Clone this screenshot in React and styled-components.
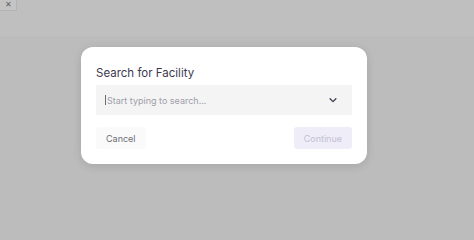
import React, { useState } from 'react'
import styled, { createGlobalStyle } from 'styled-components'

const GlobalStyle = createGlobalStyle`
  html, body {
    margin: 0;
    padding: 0;
    background: #bcbcbc;
    font-family: Inter, "Noto Sans", sans-serif;
    overflow: hidden;
  }
`

const Page = styled.div`
  position: relative;
  width: 100vw;
  height: 100vh;
  background: #bcbcbc;
  overflow: hidden;
`

const TopBar = styled.div`
  height: 37px;
  background: #bfbfbf;
  border-bottom: 1px solid #b9b9b9;
`

const CloseTab = styled.button`
  display: flex;
  align-items: center;
  justify-content: center;
  width: 17px;
  height: 11px;
  padding: 0;
  border: none;
  border-right: 1px solid #b4b4b4;
  border-bottom: 1px solid #b4b4b4;
  background: #c4c4c4;
  color: #5e5e5e;
  font-size: 8px;
  line-height: 1;
`

const Overlay = styled.div`
  position: absolute;
  inset: 0;
  display: flex;
  align-items: flex-start;
  padding: 47px 0 0 81px;
`

const Dialog = styled.div`
  width: 286px;
  box-sizing: border-box;
  padding: 18px 15px 15px;
  background: #ffffff;
  border-radius: 12px;
  box-shadow: 0 2px 10px rgba(0, 0, 0, 0.12);
`

const Title = styled.h2`
  margin: 0 0 4px;
  font-size: 11.5px;
  font-weight: 400;
  line-height: 16px;
  color: #3d3a4f;
`

const SelectBox = styled.div`
  display: flex;
  align-items: center;
  height: 30px;
  padding: 0 14px 0 9px;
  background: #f4f4f5;
  border-radius: 2px;
`

const SearchInput = styled.input`
  flex: 1;
  min-width: 0;
  border: none;
  outline: none;
  background: transparent;
  font-family: inherit;
  font-size: 9px;
  color: #3b3a47;
  padding: 0;

  &::placeholder {
    color: #9e9ea8;
  }
`

const Caret = styled.span`
  width: 1px;
  height: 10px;
  background: #6a6a72;
  margin-right: 1px;
`

const Actions = styled.div`
  display: flex;
  justify-content: space-between;
  margin-top: 12px;
`

const Button = styled.button`
  height: 22px;
  padding: 0 10px;
  border: none;
  border-radius: 3px;
  font-family: inherit;
  font-size: 9px;
  background: ${({ $primary }) => ($primary ? '#efedf8' : '#fafafa')};
  color: ${({ $primary }) => ($primary ? '#c3c0d4' : '#6e6d78')};
  cursor: ${({ disabled }) => (disabled ? 'default' : 'pointer')};
`

const Chevron = () => (
  <svg width="10" height="10" viewBox="0 0 24 24" fill="none" stroke="#3b3a47" strokeWidth="3" strokeLinecap="round" strokeLinejoin="round">
    <path d="M5 9l7 7 7-7" />
  </svg>
)

export default function App() {
  const [query, setQuery] = useState('')

  return <>
    <GlobalStyle />
    <Page>
      <TopBar>
        <CloseTab aria-label="Close">✕</CloseTab>
      </TopBar>
      <Overlay>
        <Dialog role="dialog">
          <Title>Search for Facility</Title>
          <SelectBox>
            <Caret />
            <SearchInput
              placeholder="Start typing to search..."
              value={query}
              onChange={(e) => setQuery(e.target.value)}
            />
            <Chevron />
          </SelectBox>
          <Actions>
            <Button>Cancel</Button>
            <Button $primary disabled>Continue</Button>
          </Actions>
        </Dialog>
      </Overlay>
    </Page>
  </>
}
